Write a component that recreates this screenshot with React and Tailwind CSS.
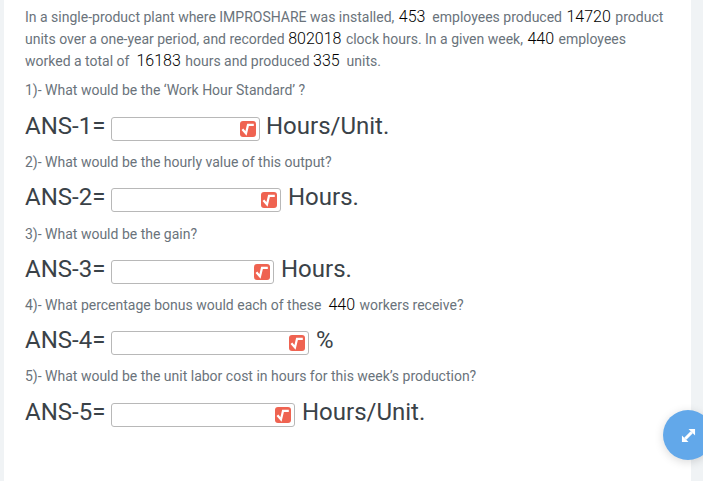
const Num = ({ children, className }) => <span className={`text-[16px] font-light text-black ${className || ''}`}>{children}</span>;

function CheckIcon() {
    return (
        <span className="absolute right-[3px] top-[3px] flex h-4 w-4 items-center justify-center rounded-[3px] bg-[#ef6351]">
            <svg viewBox="0 0 16 16" className="h-4 w-4">
                <path d="M2.4 8.2 L6 12.4 L8 3.9 L13.8 3.9" fill="none" stroke="white" strokeWidth="2.2" />
            </svg>
        </span>
    );
}

function Answer({ label, unit, width, gap = 'ml-[7px]' }) {
    return (
        <div className="flex h-[40px] items-start text-[24px] leading-[32px] text-[#3a4248]">
            <span className="w-[86px] shrink-0">{label}</span>
            <span className={`relative mt-[7px] h-6 shrink-0 rounded-[3px] border border-[#b8b8b8] bg-white ${width}`}>
                <CheckIcon />
            </span>
            <span className={gap}>{unit}</span>
        </div>
    );
}

function ResizeIcon() {
    return (
        <svg viewBox="0 0 16 16" className="ml-[1px] h-[15px] w-[15px]">
            <path d="M4.5 11.5 L11.5 4.5" stroke="white" strokeWidth="3.2" />
            <path d="M8 1 H15 V8 Z" fill="white" />
            <path d="M1 8 V15 H8 Z" fill="white" />
        </svg>
    );
}

export default function App() {
    return (
        <div className="relative h-[481px] overflow-hidden bg-[#f0f3f5] font-['Roboto',sans-serif]">
            <div className="ml-1 h-full w-[687px] bg-white pl-[21px] pt-[6px] text-[14px] leading-[22px] text-[#6a737b]">
                <p className="whitespace-nowrap">
                    In a single-product plant where IMPROSHARE was installed, <Num className="ml-[1px]">453</Num>&nbsp; employees produced <Num className="ml-[1px]">14720</Num><span className="ml-[1px]">&nbsp;product</span>
                </p>
                <p className="whitespace-nowrap">
                    units over a one-year period, and recorded <Num className="mr-[1px]">802018</Num> clock hours. In a given week, <Num className="ml-[1px] mr-[1px]">440</Num> employees
                </p>
                <p className="whitespace-nowrap">
                    worked a total of &nbsp;<Num className="mr-[1px]">16183</Num> hours and produced <Num>335</Num>&nbsp; units.
                </p>
                <p className="mt-[7px] mb-[8.5px]">1)- What would be the ‘Work Hour Standard’ ?</p>
                <Answer label="ANS-1=" unit="Hours/Unit." width="w-[149px]" gap="ml-[6px]" />
                <p className="mt-[1.5px] mb-[8px]">2)- What would be the hourly value of this output?</p>
                <Answer label="ANS-2=" unit="Hours." width="w-[170px]" />
                <p className="mt-[1.5px] mb-[8px]">3)- What would be the gain?</p>
                <Answer label="ANS-3=" unit="Hours." width="w-[163px]" />
                <p className="mt-[1.5px] mb-[8px]">
                    4)- What percentage bonus would each of these&nbsp; <Num className="mr-[1px]">440</Num> workers receive?
                </p>
                <Answer label="ANS-4=" unit="%" width="w-[198px]" />
                <p className="mt-[1px] mb-[8.5px]">5)- What would be the unit labor cost in hours for this week’s production?</p>
                <Answer label="ANS-5=" unit="Hours/Unit." width="w-[184px]" />
            </div>
            <div className="absolute left-[663px] top-[410px] flex h-[50px] w-[50px] items-center justify-center rounded-full bg-[#62a8ea] shadow-[0_2px_10px_rgba(0,0,0,0.15)]">
                <ResizeIcon />
            </div>
        </div>
    );
}
